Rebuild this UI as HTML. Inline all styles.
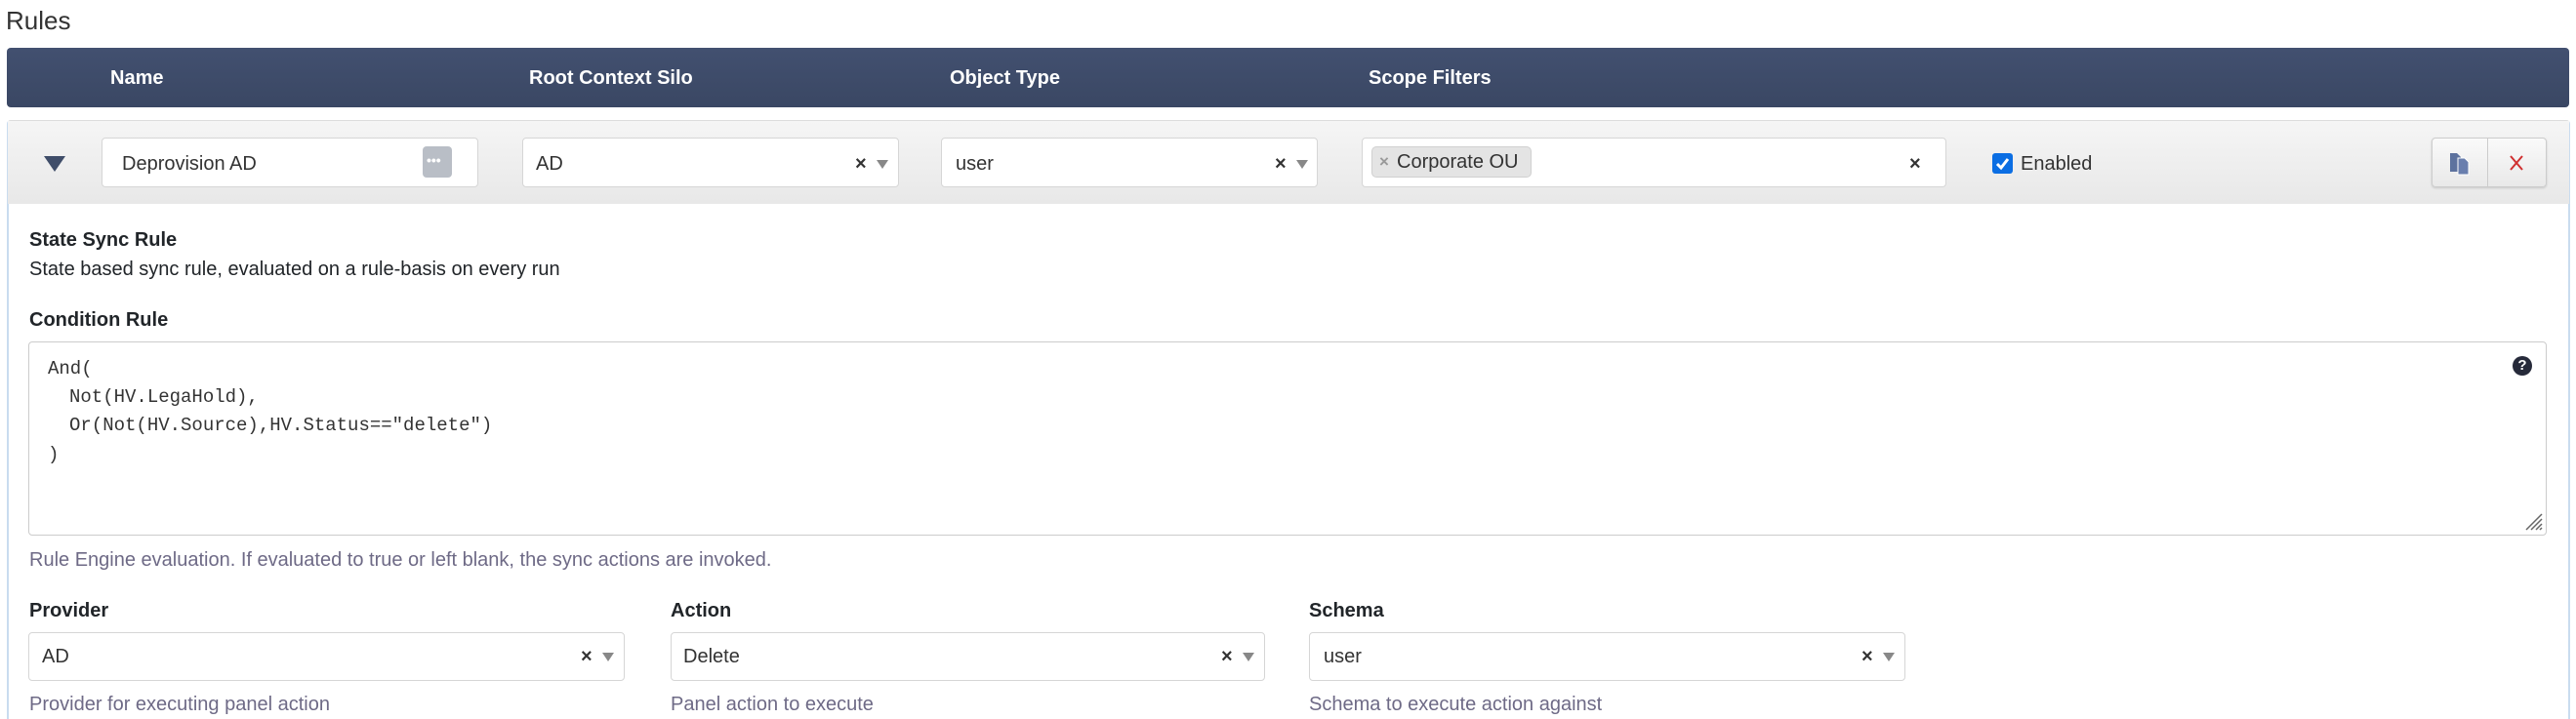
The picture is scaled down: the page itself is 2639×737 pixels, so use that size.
<!DOCTYPE html>
<html><head><meta charset="utf-8"><style>
*{box-sizing:border-box;margin:0;padding:0}
html,body{width:2639px;height:737px;overflow:hidden}
body{background:#fff;font-family:"Liberation Sans",sans-serif;color:#212529;position:relative}
.a{position:absolute}
.t{position:absolute;white-space:nowrap;line-height:1}
.hdr{left:7px;top:49px;width:2625px;height:61px;border-radius:4px;background:linear-gradient(#425070,#3a4763)}
.hl{color:#fff;font-weight:bold;font-size:20px;top:70px}
.panel{left:7px;top:123px;width:2626px;height:614px;border:1px solid #dcdcdc;border-bottom:none;border-right:2px solid #c9dcef;border-left:2px solid #c9dcef;border-radius:4px 4px 0 0}
.ph{left:8px;top:124px;width:2624px;height:85px;background:linear-gradient(#f5f5f5,#e8e8e8)}
.inp{background:#fff;border:1px solid #d6d6d6;border-radius:4px;height:51px;top:141px}
.it{font-size:20px;color:#333}
.x{font-size:20px;color:#333;font-weight:bold}
.dd{width:0;height:0;border-left:6px solid transparent;border-right:6px solid transparent;border-top:9px solid #888}
.b{font-weight:bold;font-size:20px}
.n{font-size:20px}
.h{font-size:20px;color:#6e6a86}
.mono{font-family:"Liberation Mono",monospace;font-size:19px;color:#333}
.sel{background:#fff;border:1px solid #d6d6d6;border-radius:4px;height:50px;top:648px}
</style></head><body>
<div class="t" style="left:6px;top:8px;font-size:26px;color:#333">Rules</div>
<div class="a hdr"></div>
<div class="t hl" style="left:113px">Name</div>
<div class="t hl" style="left:542px">Root Context Silo</div>
<div class="t hl" style="left:973px">Object Type</div>
<div class="t hl" style="left:1402px">Scope Filters</div>

<div class="a panel"></div>
<div class="a ph"></div>
<div class="a" style="left:45px;top:160px;width:0;height:0;border-left:11px solid transparent;border-right:11px solid transparent;border-top:16px solid #3f4d69"></div>

<div class="a inp" style="left:104px;width:386px"></div>
<div class="t it" style="left:125px;top:158px">Deprovision AD</div>
<div class="a" style="left:433px;top:150px;width:30px;height:32px;background:#b9bec6;border-radius:4px"></div>
<div class="t" style="left:437px;top:157px;color:#fff;font-size:14px;font-weight:bold">•••</div>

<div class="a inp" style="left:535px;width:386px"></div>
<div class="t it" style="left:549px;top:158px">AD</div>
<div class="t x" style="left:876px;top:158px">×</div>
<div class="a dd" style="left:898px;top:164px"></div>

<div class="a inp" style="left:964px;width:386px"></div>
<div class="t it" style="left:979px;top:158px">user</div>
<div class="t x" style="left:1306px;top:158px">×</div>
<div class="a dd" style="left:1328px;top:164px"></div>

<div class="a inp" style="left:1395px;width:599px"></div>
<div class="a" style="left:1405px;top:150px;width:164px;height:32px;background:#e4e4e4;border:1px solid #d0d0d0;border-radius:5px"></div>
<div class="t" style="left:1413px;top:157px;font-size:17px;color:#999;font-weight:bold">×</div>
<div class="t it" style="left:1431px;top:156px">Corporate OU</div>
<div class="t x" style="left:1956px;top:158px">×</div>

<div class="a" style="left:2041px;top:157px;width:21px;height:21px;background:#0b6ee3;border-radius:3px"></div>
<svg class="a" style="left:2041px;top:157px" width="21" height="21"><path d="M5 11 L9 15 L16 6" stroke="#fff" stroke-width="3" fill="none"/></svg>
<div class="t it" style="left:2070px;top:158px">Enabled</div>

<div class="a" style="left:2491px;top:141px;width:118px;height:51px;border:1px solid #ccc;border-radius:4px;background:linear-gradient(#fafafa,#e9e9e9);box-shadow:0 1px 2px rgba(0,0,0,.15)"></div>
<div class="a" style="left:2548px;top:141px;width:1px;height:51px;background:#ccc"></div>
<svg class="a" style="left:2508px;top:154px" width="24" height="26"><path d="M2 3 L9 3 L13 7 L13 22 L2 22Z" fill="#5d729e"/><path d="M10 8 L17 8 L21 12 L21 25 L10 25Z" fill="#6a7fae" stroke="#fff" stroke-width="1"/></svg>
<svg class="a" style="left:2570px;top:158px" width="16" height="18"><path d="M2 2 L14 16 M14 2 L2 16" stroke="#d03030" stroke-width="2"/></svg>

<div class="t b" style="left:30px;top:236px">State Sync Rule</div>
<div class="t n" style="left:30px;top:266px">State based sync rule, evaluated on a rule-basis on every run</div>
<div class="t b" style="left:30px;top:318px">Condition Rule</div>
<div class="a" style="left:29px;top:350px;width:2580px;height:199px;border:1px solid #ccc;border-radius:4px"></div>
<div class="t mono" style="left:49px;top:369px">And(</div>
<div class="t mono" style="left:71px;top:398px">Not(HV.LegaHold),</div>
<div class="t mono" style="left:71px;top:427px">Or(Not(HV.Source),HV.Status=="delete")</div>
<div class="t mono" style="left:49px;top:457px">)</div>
<div class="a" style="left:2574px;top:365px;width:20px;height:20px;border-radius:50%;background:#262a3a;color:#fff;font-size:15px;font-weight:bold;text-align:center;line-height:20px">?</div>
<svg class="a" style="left:2586px;top:525px" width="20" height="20"><path d="M2 18 L18 2 M7 18 L18 7 M12 18 L18 12 M16 18 L18 16" stroke="#666" stroke-width="1.5"/></svg>
<div class="t h" style="left:30px;top:564px">Rule Engine evaluation. If evaluated to true or left blank, the sync actions are invoked.</div>

<div class="t b" style="left:30px;top:616px">Provider</div>
<div class="t b" style="left:687px;top:616px">Action</div>
<div class="t b" style="left:1341px;top:616px">Schema</div>

<div class="a sel" style="left:29px;width:611px"></div>
<div class="t it" style="left:43px;top:663px">AD</div>
<div class="t x" style="left:595px;top:663px">×</div>
<div class="a dd" style="left:617px;top:669px"></div>
<div class="a sel" style="left:687px;width:609px"></div>
<div class="t it" style="left:700px;top:663px">Delete</div>
<div class="t x" style="left:1251px;top:663px">×</div>
<div class="a dd" style="left:1273px;top:669px"></div>
<div class="a sel" style="left:1341px;width:611px"></div>
<div class="t it" style="left:1356px;top:663px">user</div>
<div class="t x" style="left:1907px;top:663px">×</div>
<div class="a dd" style="left:1929px;top:669px"></div>

<div class="t h" style="left:30px;top:712px">Provider for executing panel action</div>
<div class="t h" style="left:687px;top:712px">Panel action to execute</div>
<div class="t h" style="left:1341px;top:712px">Schema to execute action against</div>
</body></html>
